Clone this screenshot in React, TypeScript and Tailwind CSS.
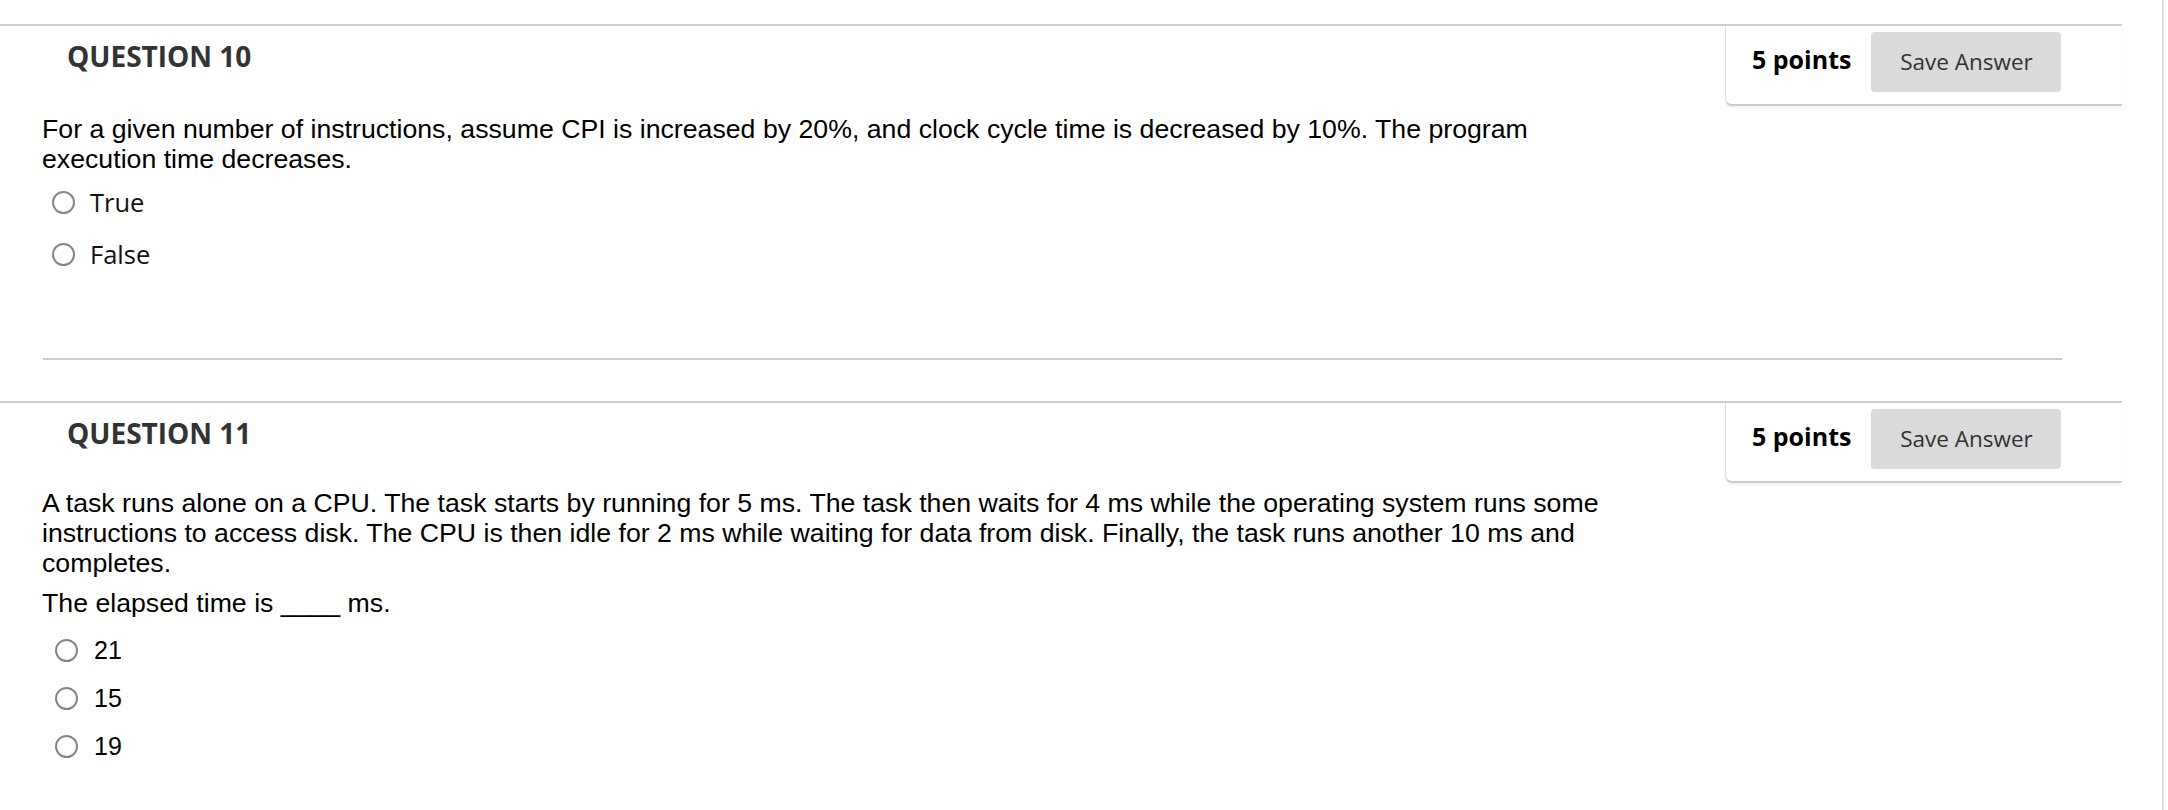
import React from "react";

const Radio = ({ label, arial }: { label: string; arial?: boolean }) => {
  return (
    <div className={arial ? "flex items-center h-[34px] gap-[16px] pl-[13px]" : "flex items-center h-[34px] gap-[15px] pl-[10px]"}>
      <span className="block w-[23px] h-[23px] rounded-full border-2 border-[#858585] bg-white shrink-0" />
      <span
        className={
          arial
            ? "font-['Liberation_Sans',Arial,sans-serif] text-[25px] text-black leading-[34px]"
            : "font-['Open_Sans',sans-serif] text-[25.5px] text-[#111] leading-[34px]"
        }
      >
        {label}
      </span>
    </div>
  );
};

const Header = ({ title }: { title: string }) => {
  return (
    <div className="flex justify-between items-start">
      <h2 className="pl-[67px] pt-[12px] font-['Open_Sans',sans-serif] font-bold text-[28px] text-[#333] leading-[36px]">
        {title}
      </h2>
      <div className="w-[397px] h-[80px] border-l border-b-2 border-l-[#e0e0e0] border-b-[#cccccc] rounded-bl-[7px] bg-white shadow-[0_2px_3px_rgba(0,0,0,0.05)] flex items-start pt-[6px] pl-[26px] gap-[20px]">
        <span className="font-['Open_Sans',sans-serif] font-bold text-[25px] text-black leading-[55px]">
          5 points
        </span>
        <button className="w-[190px] h-[60px] rounded-[4px] bg-[#dadada] font-['Open_Sans',sans-serif] text-[22.5px] text-[#333]">
          Save Answer
        </button>
      </div>
    </div>
  );
};

export default function App() {
  return (
    <div className="w-full h-[810px] bg-white overflow-hidden flex">
      <div className="w-[2162px] shrink-0 pt-[24px]">
        {/* question 10 */}
        <section className="w-[2122px] border-t-2 border-[#cccccc]">
          <Header title="QUESTION 10" />
          <div className="pl-[42px] mt-[8px]">
            <p className="w-[1580px] font-['Liberation_Sans',Arial,sans-serif] text-[26.7px] leading-[30px] text-black">
              For a given number of instructions, assume CPI is increased by 20%, and clock cycle time is decreased by 10%. The program execution time decreases.
            </p>
            <div className="mt-[11px] flex flex-col gap-[18px]">
              <Radio label="True" />
              <Radio label="False" />
            </div>
          </div>
        </section>
        <div className="ml-[43px] w-[2019px] h-[2px] bg-[#cccccc] mt-[87px]" />

        {/* question 11 */}
        <section className="w-[2122px] border-t-2 border-[#cccccc] mt-[41px]">
          <Header title="QUESTION 11" />
          <div className="pl-[42px] mt-[5px]">
            <p className="w-[1580px] font-['Liberation_Sans',Arial,sans-serif] text-[26.7px] leading-[30px] text-black">
              A task runs alone on a CPU. The task starts by running for 5 ms. The task then waits for 4 ms while the operating system runs some instructions to access disk. The CPU is then idle for 2 ms while waiting for data from disk. Finally, the task runs another 10 ms and completes.
            </p>
            <p className="mt-[10px] font-['Liberation_Sans',Arial,sans-serif] text-[26.7px] leading-[30px] text-black">
              The elapsed time is ____ ms.
            </p>
            <div className="mt-[15px] flex flex-col gap-[14px]">
              <Radio label="21" arial />
              <Radio label="15" arial />
              <Radio label="19" arial />
            </div>
          </div>
        </section>
      </div>
      <div className="flex-1 border-l-2 border-[#dddddd]" />
    </div>
  );
}
